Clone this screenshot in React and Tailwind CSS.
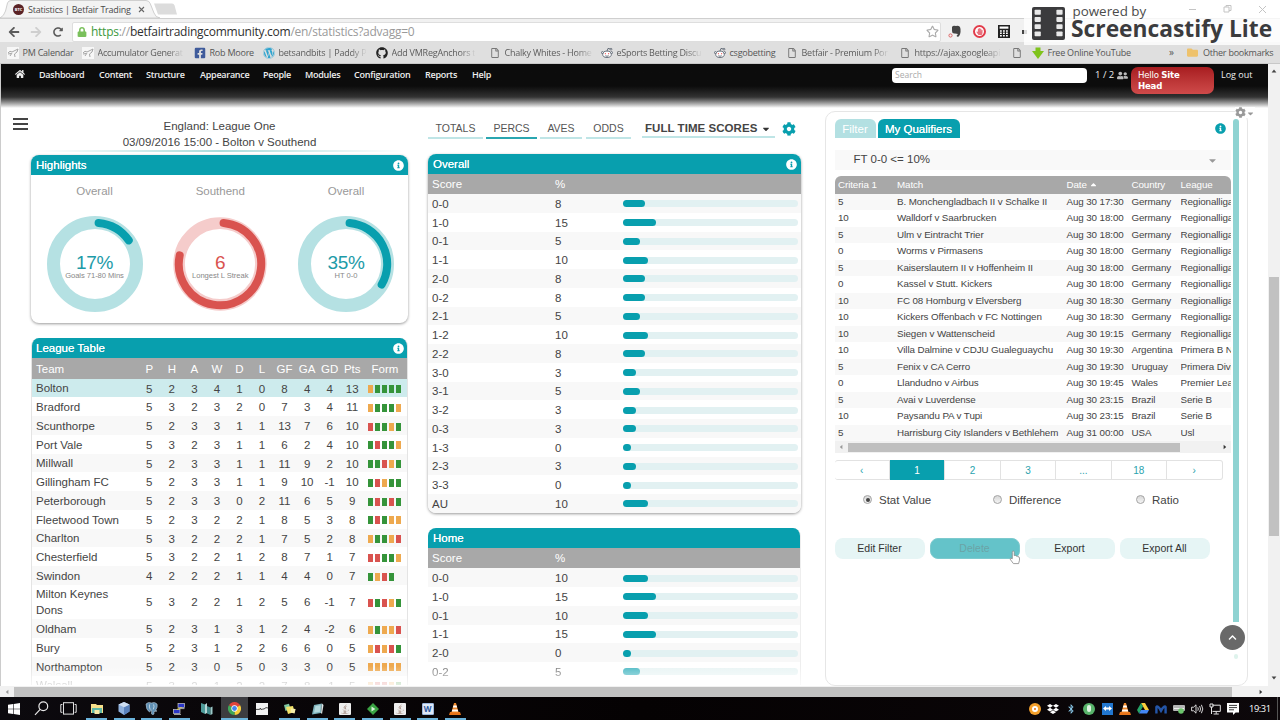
import React from "react";
import { FaFacebookSquare, FaWordpress, FaGithub, FaRegStar, FaHome, FaInfoCircle, FaCog, FaUserFriends, FaLock, FaDropbox, FaBluetoothB, FaRegFile, FaCaretDown, FaCaretUp, FaJava, FaHandPaper, FaFolder, FaArrowLeft, FaArrowRight, FaRedoAlt, FaChevronUp } from "react-icons/fa";

/* ---------- small drawings ---------- */
const Reddit = () => (
  <svg width="12" height="12" viewBox="0 0 12 12" fill="none" stroke="#5b6470" strokeWidth="0.9">
    <ellipse cx="6" cy="7.3" rx="4.3" ry="3.2" fill="#fff" />
    <path d="M6 4 L7 1.4 L9.3 2" />
    <circle cx="10" cy="2.2" r="0.9" fill="#fff" />
    <circle cx="1.4" cy="5.6" r="1" fill="#fff" />
    <circle cx="10.6" cy="5.6" r="1" fill="#fff" />
    <circle cx="4.4" cy="6.7" r="0.6" fill="#e55" stroke="none" />
    <circle cx="7.6" cy="6.7" r="0.6" fill="#e55" stroke="none" />
    <path d="M4.3 8.8 Q6 9.7 7.7 8.8" />
  </svg>
);
const Horse = () => (
  <svg width="12" height="12" viewBox="0 0 12 12">
    <rect width="12" height="12" fill="#f7f7f7" />
    <path d="M1 6 Q3 3 5 5 L8 3.5 L11 2 L10 5 L7.5 7 L8 10 M5 6 L3 9 M1 7 L4 6.5" stroke="#a5a5a5" strokeWidth="1" fill="none" />
  </svg>
);
const Cone = () => (
  <svg width="12" height="12" viewBox="0 0 12 12">
    <path d="M1 9 H11 L12 12 H0 Z" fill="#e8741a" />
    <path d="M5 0 H7 L9.6 9.6 H2.4 Z" fill="#f08a2c" />
    <path d="M4.4 2.6 H7.6 L8.1 4.6 H3.9 Z M3.3 6.6 H8.7 L9.2 8.4 H2.8 Z" fill="#fff" />
  </svg>
);
const Chrome = () => (
  <svg width="13" height="13" viewBox="-6 -6 12 12">
    <path d="M0 0 L-5.2 -3 A6 6 0 0 1 5.2 -3 Z" fill="#e0443a" />
    <path d="M0 0 L5.2 -3 A6 6 0 0 1 0 6 Z" fill="#f9ce3b" />
    <path d="M0 0 L0 6 A6 6 0 0 1 -5.2 -3 Z" fill="#3fa757" />
    <circle r="2.9" fill="#fff" />
    <circle r="2.2" fill="#4484ee" />
  </svg>
);
const Windows = () => (
  <svg width="12" height="12" viewBox="0 0 12 12" fill="#fff">
    <path d="M0 1.7 L5.2 1 V5.7 H0 Z M5.8 0.9 L12 0 V5.7 H5.8 Z M0 6.3 H5.2 V11 L0 10.3 Z M5.8 6.3 H12 V12 L5.8 11.1 Z" />
  </svg>
);
const SearchGlass = () => (
  <svg width="15" height="15" viewBox="0 0 15 15" fill="none" stroke="#e8e8e8" strokeWidth="1.2">
    <circle cx="9.3" cy="5.2" r="4.4" />
    <path d="M6.2 8.4 L1 13.8" />
  </svg>
);
const TaskView = () => (
  <svg width="17" height="13" viewBox="0 0 17 13" fill="none" stroke="#e0e0e0">
    <rect x="3.5" y="0.7" width="10" height="11.4" />
    <path d="M2.4 2.5 H0.8 V10.3 H2.4 M14.6 2.5 H16.2 V10.3 H14.6" />
  </svg>
);
const Explorer = () => (
  <svg width="12" height="11" viewBox="0 0 12 11">
    <path d="M0 1 H5 L6 2 H12 V10 H0 Z" fill="#f6df8a" />
    <path d="M1 5 H11 V10 H1 Z" fill="#5db8a8" />
    <path d="M3.5 7 H8.5 V11 H3.5 Z" fill="#f6e9a8" />
  </svg>
);
const VBox = () => (
  <svg width="12" height="13" viewBox="0 0 12 13">
    <path d="M6 0 L11.5 2.5 V9.5 L6 13 L0.5 9.5 V2.5 Z" fill="#8fb1de" />
    <path d="M6 5.2 L11.5 2.5 V9.5 L6 13 Z" fill="#5a82bd" />
    <path d="M6 0 L11.5 2.5 L6 5.2 L0.5 2.5 Z" fill="#cfdff2" />
  </svg>
);
const Elephant = () => (
  <svg width="13" height="13" viewBox="0 0 13 13">
    <path d="M1 2 Q3 -0.5 6.5 1 Q10 -0.5 12 2 Q13 5 10.5 8.5 L12 9 L9 9.6 V12 Q7.6 13.4 6.6 12 V8 L4.5 10 Q1 8 1 2 Z" fill="#5f8fb3" stroke="#b9cbd9" strokeWidth="0.6" />
    <path d="M4.6 2.4 Q4 5 5.2 7.6 M8.6 2.4 Q9.6 4.5 8.3 7.4" stroke="#e3edf4" strokeWidth="0.7" fill="none" />
  </svg>
);
const Putty = () => (
  <svg width="12" height="12" viewBox="0 0 12 12">
    <rect x="5" y="0.5" width="6.5" height="4" fill="#2a36c8" stroke="#c9c9c9" strokeWidth="0.7" />
    <rect x="0.5" y="6.5" width="6.5" height="4" fill="#2a36c8" stroke="#c9c9c9" strokeWidth="0.7" />
    <path d="M8.5 4.6 L4 6.4" stroke="#f0e23c" />
    <path d="M6 5.6 H11.5 M1 11.6 H8" stroke="#a9a9a9" />
  </svg>
);
const Racks = () => (
  <svg width="13" height="13" viewBox="0 0 13 13">
    <path d="M1 1 L5 2.5 V12 L1 10 Z" fill="#4f9c9a" />
    <path d="M5 2.5 L7 1 V11 L5 12 Z" fill="#b7d8d8" />
    <path d="M7 4 L10.5 5.5 V13 L7 11.5 Z" fill="#3f8788" />
    <path d="M10.5 5.5 L12.5 4.4 V12 L10.5 13 Z" fill="#9cc9c9" />
  </svg>
);
const Pulse = () => (
  <svg width="12" height="12" viewBox="0 0 12 12">
    <rect width="12" height="12" fill="#f2f2f2" />
    <path d="M0 6.4 H3.6 L4.4 5 L5.4 7 L6.4 6 H8 L10 4.6 L12 5" stroke="#333" fill="none" strokeWidth="0.9" />
  </svg>
);
const Notes = () => (
  <svg width="13" height="12" viewBox="0 0 13 12">
    <path d="M1 2 L6 0.8 L7.5 6 L2.5 8 Z" fill="#7fc9a3" />
    <path d="M3 4 L10 3 L11.5 9 L5 11 Z" fill="#f3e36b" />
    <path d="M8 5.5 L12.6 6 L11.6 10.4 L7.6 9.6 Z" fill="#f8efaa" />
  </svg>
);
const Book = () => (
  <svg width="13" height="12" viewBox="0 0 13 12">
    <path d="M3 2 L11 0.5 L10 10 L1 11.5 Z" fill="#7fb4bd" />
    <path d="M4.5 3 L9.6 2.2 L9 8.8 L3 9.8 Z" fill="#b4d8dc" />
    <path d="M11 0.5 L12.5 2 L11 11 L10 10 Z" fill="#e0e6e6" />
  </svg>
);
const JavaTile = () => (
  <span className="flex h-[12px] w-[12px] items-center justify-center rounded-[1px] bg-[#eee] text-[#8a6a5c]"><FaJava size={10} /></span>
);
const Diamond = () => (
  <svg width="12" height="12" viewBox="0 0 12 12">
    <path d="M6 0 L12 6 L6 12 L0 6 Z" fill="#3aa343" />
    <path d="M4.5 3.4 L8.4 6 L4.5 8.6 Z" fill="#d8f0da" />
  </svg>
);
const Word = () => (
  <span className="flex h-[12px] w-[12px] items-center justify-center rounded-[1px] border border-[#9db8df] bg-[#dfe9f7] text-[8px] font-bold leading-none text-[#2b57a0]">W</span>
);
const Drive = () => (
  <svg width="12" height="11" viewBox="0 0 12 11">
    <path d="M4 0 H8 L12 7 H8 Z" fill="#fbce3c" />
    <path d="M4 0 L6 3.5 L2 10.5 L0 7 Z" fill="#25a366" />
    <path d="M4 7 H12 L10 10.6 H2 Z" fill="#4486f4" />
  </svg>
);
const Speaker = () => (
  <svg width="13" height="12" viewBox="0 0 13 12" fill="none" stroke="#ececec" strokeWidth="0.9">
    <path d="M0.6 4.2 H2.6 L5 1.8 V10.2 L2.6 7.8 H0.6 Z" />
    <path d="M6.8 4.3 Q7.8 6 6.8 7.7 M8.6 3 Q10.5 6 8.6 9 M10.4 1.8 Q13.2 6 10.4 10.2" />
  </svg>
);
const Monitor = () => (
  <svg width="12" height="12" viewBox="0 0 12 12" fill="none" stroke="#e4e4e4">
    <path d="M3.5 2.2 H11.3 V8.4 H3.5 M7.2 8.6 V10.8 M4.6 11 H9.8" />
    <path d="M1 1 H4 V4 H1 Z M2.5 4 V11" />
  </svg>
);
const Message = () => (
  <svg width="12" height="12" viewBox="0 0 12 12">
    <path d="M0 0 H12 V9.4 H8.6 L6 12 V9.4 H0 Z" fill="#fff" />
    <path d="M2 2.4 H10 M2 4.6 H10 M2 6.8 H7" stroke="#222" strokeWidth="0.9" />
  </svg>
);
const Film = () => (
  <svg width="33" height="33" viewBox="0 0 33 33">
    <rect width="33" height="33" rx="2" fill="#3b3b3d" />
    {[2.8, 10, 17.2, 24.4].map((y) => (
      <g key={y} fill="#e9e9e9">
        <rect x="2.6" y={y} width="6.2" height="4.9" rx="0.8" />
        <rect x="24.4" y={y} width="6.2" height="4.9" rx="0.8" />
      </g>
    ))}
  </svg>
);

/* ---------- browser chrome ---------- */
const file = <FaRegFile size={10} className="text-[#777]" />;
const BOOKMARKS = [
  { w: "w-[75px]", icon: <Horse />, label: "PM Calendar" },
  { w: "w-[112px]", icon: <Horse />, label: "Accumulator Generat", fade: true },
  { w: "w-[69px]", icon: <FaFacebookSquare size={12} color="#3f5b9b" />, label: "Rob Moore" },
  { w: "w-[113px]", icon: <FaWordpress size={12} color="#2fa4cf" />, label: "betsandbits | Paddy P", fade: true },
  { w: "w-[113px]", icon: <FaGithub size={12} color="#222" />, label: "Add VMRegAnchors t", fade: true },
  { w: "w-[112px]", icon: file, label: "Chalky Whites - Home", fade: true },
  { w: "w-[113px]", icon: <Reddit />, label: "eSports Betting Discu", fade: true },
  { w: "w-[72px]", icon: <Reddit />, label: "csgobetting" },
  { w: "w-[113px]", icon: file, label: "Betfair - Premium Por", fade: true },
  { w: "w-[112px]", icon: file, label: "https://ajax.googleapi", fade: true },
  { w: "w-[21px]", icon: file, label: "" },
  { w: "w-[138px]", icon: <svg width="12" height="12" viewBox="0 0 12 12"><path d="M3.5 0.5 H8.5 V4 H12 L6 12 L0 4 H3.5 Z" fill="#7fc31c" /></svg>, label: "Free Online YouTube" },
];

function Browser() {
  return (
    <header className="relative h-[64px] shrink-0 font-['Open_Sans','Noto_Sans',sans-serif] text-[#555]">
      <div className="flex h-[19px] items-end border-b border-[#cfcfcf] bg-white">
        <svg className="shrink-0" width="178" height="19" viewBox="0 0 178 19">
          <path d="M154 4.5 H172 Q174 4.5 174.6 6.5 L177 15.5 H158 Z" fill="#dcdcdc" />
          <path d="M0 19 Q4 17 5.5 12 L7.5 4 Q8.5 1.5 11 1.5 H146 Q149 1.5 150.2 4.5 L154 14 Q155.5 18.5 160 19 Z" fill="#f3f3f3" stroke="#c4c4c4" strokeWidth="0.8" />
        </svg>
        <div className="-ml-[165px] mb-px flex h-[15px] items-center">
          <span className="flex h-[11px] w-[11px] items-center justify-center rounded-full bg-[#5a2225] text-[4px] font-bold text-white">BTC</span>
          <span className="ml-[4px] w-[104px] whitespace-nowrap text-[9px] tracking-[-0.22px] text-[#4a4a4a]">Statistics | Betfair Trading</span>
          <svg className="ml-[6px]" width="7" height="7" viewBox="0 0 7 7" stroke="#666" strokeWidth="1.1"><path d="M1 1 L6 6 M6 1 L1 6" /></svg>
        </div>
      </div>
      <div className="flex h-[23px] items-center bg-[#f1f1f1] pl-[8px] pt-[2px]">
        <FaArrowLeft size={12} className="text-[#5c5c5c]" />
        <FaArrowRight size={12} className="ml-[10px] text-[#cfcfcf]" />
        <FaRedoAlt size={10} className="ml-[11px] text-[#5c5c5c]" />
        <div className="ml-[9px] flex h-[20px] w-[869px] items-center rounded-[2px] border border-[#dedede] bg-white pl-[4px]">
          <FaLock size={10} className="text-[#7ac05c]" />
          <span className="ml-[4px] whitespace-nowrap text-[12px] tracking-[-0.26px] text-[#9a9a9a]"><span className="text-[#3c9a3c]">https</span>://<span className="text-[#2f2f2f]">betfairtradingcommunity.com</span>/en/statistics?advagg=0</span>
          <FaRegStar size={13} className="ml-auto mr-[1px] text-[#aaa]" />
        </div>
        <svg className="ml-[7px]" width="13" height="13" viewBox="0 0 13 13"><path d="M4 2 Q5 0 8 1 Q12 0 12.5 4 Q13 10 10 12 L8.5 11 L10 9 L7 8.5 Q4 9 4 6 Z" fill="#444" /><circle cx="2.5" cy="10.5" r="1.6" fill="none" stroke="#d66" /></svg>
        <span className="ml-[12px] flex h-[13px] w-[13px] items-center justify-center rounded-full border-2 border-[#e23b4a] bg-white text-[#e8707c]"><FaHandPaper size={7} /></span>
        <svg className="ml-[12px]" width="12" height="13" viewBox="0 0 12 13"><rect width="12" height="13" fill="#222" /><path d="M1.6 2.6 H10.4" stroke="#fff" strokeWidth="2.2" /><path d="M2 6 H10.4 M2 8.3 H10.4 M2 10.7 H10.4" stroke="#fff" strokeWidth="1.4" strokeDasharray="1.8 1.2" /></svg>
        <span className="ml-[12px] h-[4px] w-[5px] bg-[#444]" />
      </div>
      <div className="flex h-[22px] items-center border-b border-[#c8c8c8] bg-[#dfdfdf] pl-[7px] text-[9px]">
        {BOOKMARKS.map((b, i) => (
          <div key={i} className={`flex shrink-0 items-center ${b.w}`}>
            <span className="flex w-[12px] shrink-0 justify-center">{b.icon}</span>
            <span className={`ml-[3.5px] whitespace-nowrap tracking-[-0.23px] ${b.fade ? "bg-linear-to-r from-[#555] from-82% to-[#d4d4d4] bg-clip-text text-transparent" : ""}`}>{b.label}</span>
          </div>
        ))}
        <span className="-ml-[1px] text-[10px]">»</span>
        <FaFolder size={11} className="ml-[13px] text-[#eec26c]" />
        <span className="ml-[5px] whitespace-nowrap tracking-[-0.23px]">Other bookmarks</span>
      </div>
      <div className="absolute right-0 top-0 h-[45px] w-[256px] bg-white/80">
        <div className="flex pl-[8px] pt-[7px]">
          <Film />
          <div className="-mt-[5px] ml-[6px] whitespace-nowrap">
            <div className="pl-[1.5px] text-[13.4px] leading-[18px] text-[#4b4b4b]">powered by</div>
            <div className="text-[22.8px] font-bold leading-[18px] text-[#3b3b3d]">Screencastify Lite</div>
          </div>
        </div>
        <svg className="absolute right-[12px] top-[4px]" width="80" height="10" viewBox="0 0 80 10" fill="none" stroke="#c4c4c4"><path d="M1 5.5 H8 M36 3 H41 V8 H36 Z M38 3 V1.5 H43 V6.5 H41 M71 2 L78 9 M78 2 L71 9" /></svg>
      </div>
    </header>
  );
}

/* ---------- admin bar ---------- */
const MENU = [
  ["Dashboard", "w-[60px]"], ["Content", "w-[47px]"], ["Structure", "w-[54px]"], ["Appearance", "w-[63px]"],
  ["People", "w-[42px]"], ["Modules", "w-[49px]"], ["Configuration", "w-[71px]"], ["Reports", "w-[47px]"], ["Help", "w-[420px]"],
];
function AdminBar() {
  return (
    <nav className="flex h-[44px] shrink-0 items-start bg-linear-to-b from-[#0c0c0c] from-50% via-[#333] via-75% to-white font-['Open_Sans','Noto_Sans',sans-serif] text-[9px] text-[#eee]">
      <FaHome size={10} className="ml-[14px] mt-[5px]" />
      <div className="ml-[14px] mt-[3px] flex font-semibold leading-[16px]">
        {MENU.map(([t, w]) => <span key={t} className={`${w} whitespace-nowrap tracking-[-0.26px]`}>{t}</span>)}
      </div>
      <div className="mt-[4px] h-[15px] w-[195px] shrink-0 rounded-[4px] bg-white pl-[3px] text-[8.5px] leading-[14px] text-[#aaa]">Search</div>
      <span className="ml-[8px] mt-[3px] w-[22px] whitespace-nowrap text-[9.5px] leading-[16px]">1 / 2</span>
      <FaUserFriends size={11} className="mt-[6px] text-[#bbb]" />
      <div className="ml-[3px] mt-[3px] h-[27px] w-[83px] shrink-0 rounded-[7px] bg-linear-to-b from-[#a81c20] to-[#cf4a4a] pl-[7px] pt-[3px] font-['DejaVu_Sans',sans-serif] text-[8.6px] leading-[10.5px] tracking-[-0.2px] text-white">Hello <b>Site<br />Head</b></div>
      <span className="ml-[7px] mt-[3px] whitespace-nowrap leading-[16px]">Log out</span>
    </nav>
  );
}

/* ---------- left column ---------- */
function polar(r, deg) {
  const a = ((deg - 90) * Math.PI) / 180;
  return `${(48 + r * Math.cos(a)).toFixed(2)} ${(48 + r * Math.sin(a)).toFixed(2)}`;
}
function Ring({ title, value, note, end, red }) {
  return (
    <div className="relative flex w-[96px] flex-col items-center">
      <div className="h-[41px] pt-[7px] text-[11.5px] leading-[18px] text-[#999]">{title}</div>
      <svg width="96" height="96" viewBox="0 0 96 96" fill="none">
        <circle cx="48" cy="48" r={red ? 40.9 : 41.5} stroke={red ? "#f5cccb" : "#b5e1e3"} strokeWidth={red ? 11.6 : 13} />
        <path d={`M ${polar(41.2, 5)} A 41.2 41.2 0 ${end > 185 ? 1 : 0} 1 ${polar(41.2, end)}`} stroke={red ? "#d9534f" : "#089fae"} strokeWidth="8" strokeLinecap="round" />
      </svg>
      <div className="absolute top-[78px] flex flex-col items-center">
        <span className={`text-[19px] leading-[20px] tracking-[-0.3px] ${red ? "text-[#d9534f]" : "text-[#1d9ba8]"}`}>{value}</span>
        <span className="-mt-[2px] whitespace-nowrap text-[7.6px] leading-[10px] tracking-[-0.05px] text-[#888]">{note}</span>
      </div>
    </div>
  );
}

const TEAMS = [
  ["Bolton", "5 2 3 4 1 0 8 4 4 13", "ogggg"],
  ["Bradford", "5 3 2 3 2 0 7 3 4 11", "ogggo"],
  ["Scunthorpe", "5 2 3 3 1 1 13 7 6 10", "rggog"],
  ["Port Vale", "5 3 2 3 1 1 6 2 4 10", "grggo"],
  ["Millwall", "5 2 3 3 1 1 11 9 2 10", "ggrog"],
  ["Gillingham FC", "5 2 3 3 1 1 9 10 -1 10", "grogg"],
  ["Peterborough", "5 2 3 3 0 2 11 6 5 9", "grgrg"],
  ["Fleetwood Town", "5 2 3 2 2 1 8 5 3 8", "grgoo"],
  ["Charlton", "5 3 2 2 2 1 7 5 2 8", "oggor"],
  ["Chesterfield", "5 3 2 2 1 2 8 7 1 7", "rrggo"],
  ["Swindon", "4 2 2 2 1 1 4 4 0 7", "gorg"],
  ["Milton Keynes Dons", "5 3 2 2 1 2 5 6 -1 7", "rgrog"],
  ["Oldham", "5 2 3 1 3 1 2 4 -2 6", "ogoor"],
  ["Bury", "5 2 3 1 2 2 6 6 0 5", "ororg"],
  ["Northampton", "5 2 3 0 5 0 3 3 0 5", "ooooo"],
  ["Walsall", "5 3 2 1 2 2 7 8 -1 5", "orrog"],
];
const FORM = { o: "bg-[#eea94f]", g: "bg-[#35943a]", r: "bg-[#d9534f]" };
const GRID = "grid grid-cols-[102px_repeat(10,22.55px)_1fr] items-center pl-[5px] pt-[2px]";

function CardHead({ title, info = true }) {
  return (
    <div className="flex h-[20px] shrink-0 items-center justify-between bg-[#089fae] pl-[5px] pr-[4.5px] pt-[1px] text-[11.5px] text-white [text-shadow:0_0_0.5px_#fff]">
      <span>{title}</span>
      {info && <FaInfoCircle size={11} />}
    </div>
  );
}

function LeftColumn() {
  return (
    <section className="flex h-[573px] w-[377px] flex-col">
      <div className="mt-[7px] flex h-[31px] shrink-0 flex-col items-center text-[11.5px] leading-[15.6px] text-[#444]">
        <span>England: League One</span>
        <span>03/09/2016 15:00 - Bolton v Southend</span>
      </div>
      <div className="mx-[3px] h-[2px] shrink-0 bg-linear-to-r from-white via-[#a9dcdc] to-white" />
      <div className="mt-[3px] h-[168px] shrink-0 overflow-hidden rounded-[8px] bg-white shadow-[0_1px_3px_rgba(0,0,0,0.4)]">
        <CardHead title="Highlights" />
        <div className="flex justify-between pl-[15.5px] pr-[14px]">
          <Ring title="Overall" value="17%" note="Goals 71-80 Mins" end={55} />
          <Ring title="Southend" value="6" note="Longest L Streak" end={282} red />
          <Ring title="Overall" value="35%" note="HT 0-0" end={120} />
        </div>
      </div>
      <div className="mt-[15px] flex-1 overflow-hidden rounded-t-[8px] border-x border-[#e4e4e4] text-[11.5px] text-[#444]">
        <div className="-mx-px"><CardHead title="League Table" /></div>
        <div className={`-mx-px h-[20.5px] bg-[#a8a8a8] text-white ${GRID}`}>
          <span>Team</span>
          {["P", "H", "A", "W", "D", "L", "GF", "GA", "GD", "Pts"].map((h) => <span key={h} className="text-center">{h}</span>)}
          <span className="pl-[8px]">Form</span>
        </div>
        {TEAMS.map(([name, stats, form], i) => (
          <div key={name} className={`-mx-px ${name.startsWith("Milton") ? "h-[34.3px]" : "h-[18.77px]"} ${i === 0 ? "bg-[#cdebed]" : i % 2 ? "bg-white" : "bg-[#f8f8f8]"} ${i === 15 ? "opacity-50" : ""} ${GRID}`}>
            <span className="w-[90px] leading-[15.6px]">{name}</span>
            {stats.split(" ").map((s, j) => <span key={j} className="text-center">{s}</span>)}
            <span className="flex gap-[2px] pl-[5px]">
              {[...form].map((f, j) => <span key={j} className={`h-[8px] w-[5px] ${FORM[f]}`} />)}
            </span>
          </div>
        ))}
      </div>
    </section>
  );
}

/* ---------- middle column ---------- */
const BAR = { 0: "w-[8.5px]", 3: "w-[13.5px]", 5: "w-[17px]", 8: "w-[22px]", 10: "w-[25.5px]", 15: "w-[33.5px]" };
function Scores({ title, rows, info, className }) {
  return (
    <div className={`overflow-hidden bg-white text-[11.5px] text-[#444] ${className}`}>
      <CardHead title={title} info={info} />
      <div className="flex h-[20px] items-center bg-[#a8a8a8] pl-[4px] pt-[1px] text-white"><span className="w-[123px]">Score</span><span>%</span></div>
      {rows.map(([s, v], i) => (
        <div key={s} className={`flex h-[18.75px] items-center pl-[4px] pt-[1px] ${i % 2 ? "bg-white" : "bg-[#f8f8f8]"} ${title === "Home" && i === 5 ? "opacity-70" : ""}`}>
          <span className="w-[123px] pt-[1px]">{s}</span>
          <span className="w-[67.5px] pt-[1px]">{v}</span>
          <span className="h-[7px] w-[175px] rounded-full bg-[#e2f1f2]"><span className={`block h-[7px] rounded-full bg-[#089fae] ${BAR[v]}`} /></span>
        </div>
      ))}
    </div>
  );
}
const OVERALL = [["0-0", 8], ["1-0", 15], ["0-1", 5], ["1-1", 10], ["2-0", 8], ["0-2", 8], ["2-1", 5], ["1-2", 10], ["2-2", 8], ["3-0", 3], ["3-1", 5], ["3-2", 3], ["0-3", 3], ["1-3", 0], ["2-3", 3], ["3-3", 0], ["AU", 10]];
const HOME = [["0-0", 10], ["1-0", 15], ["0-1", 10], ["1-1", 15], ["2-0", 0], ["0-2", 5]];

function MiddleColumn() {
  return (
    <section className="ml-[20px] flex h-[573px] w-[373px] flex-col">
      <div className="flex h-[42px] shrink-0 items-start pt-[6px] text-[10.5px] text-[#555]">
        <span className="mr-[3px] h-[21px] w-[55px] border-b-2 border-[#bfe5e6] text-center leading-[20px]">TOTALS</span>
        <span className="mr-[3px] h-[21px] w-[51px] border-b-2 border-[#2aa6b0] text-center leading-[20px]">PERCS</span>
        <span className="mr-[4px] h-[21px] w-[42px] border-b-2 border-[#bfe5e6] text-center leading-[20px]">AVES</span>
        <span className="mr-[11px] h-[21px] w-[45px] border-b-2 border-[#bfe5e6] text-center leading-[20px]">ODDS</span>
        <span className="flex h-[20px] w-[133px] shrink-0 items-center justify-between border-b-2 border-[#bfe5e6] pl-[3px] pr-[4px] pt-[3px] text-[11.5px] font-bold text-[#444]"><span className="whitespace-nowrap tracking-[0.05px]">FULL TIME SCORES</span><FaCaretDown size={10} className="text-[#333]" /></span>
        <FaCog size={14} className="ml-[7px] mt-[4px] shrink-0 text-[#089fae]" />
      </div>
      <Scores title="Overall" info rows={OVERALL} className="shrink-0 rounded-[8px] shadow-[0_1px_3px_rgba(0,0,0,0.4)]" />
      <Scores title="Home" info={false} rows={HOME} className="mt-[15.5px] flex-1 rounded-t-[8px] border-r border-[#eee]" />
    </section>
  );
}

/* ---------- right panel ---------- */
const MATCHES = [
  [5, "B. Monchengladbach II v Schalke II", "Aug 30 17:30", "Germany", "Regionalliga"],
  [10, "Walldorf v Saarbrucken", "Aug 30 18:00", "Germany", "Regionalliga"],
  [5, "Ulm v Eintracht Trier", "Aug 30 18:00", "Germany", "Regionalliga"],
  [0, "Worms v Pirmasens", "Aug 30 18:00", "Germany", "Regionalliga"],
  [5, "Kaiserslautern II v Hoffenheim II", "Aug 30 18:00", "Germany", "Regionalliga"],
  [0, "Kassel v Stutt. Kickers", "Aug 30 18:00", "Germany", "Regionalliga"],
  [10, "FC 08 Homburg v Elversberg", "Aug 30 18:30", "Germany", "Regionalliga"],
  [10, "Kickers Offenbach v FC Nottingen", "Aug 30 18:30", "Germany", "Regionalliga"],
  [10, "Siegen v Wattenscheid", "Aug 30 19:15", "Germany", "Regionalliga"],
  [10, "Villa Dalmine v CDJU Gualeguaychu", "Aug 30 19:30", "Argentina", "Primera B Nacional"],
  [5, "Fenix v CA Cerro", "Aug 30 19:30", "Uruguay", "Primera Division"],
  [0, "Llandudno v Airbus", "Aug 30 19:45", "Wales", "Premier League"],
  [5, "Avai v Luverdense", "Aug 30 23:15", "Brazil", "Serie B"],
  [10, "Paysandu PA v Tupi", "Aug 30 23:15", "Brazil", "Serie B"],
  [5, "Harrisburg City Islanders v Bethlehem", "Aug 31 00:00", "USA", "Usl"],
];
const MCOLS = "grid grid-cols-[59px_169.5px_65px_49px_51px] items-center pl-[3.5px] pt-[1px] whitespace-nowrap";
const BTN = "flex h-[21px] w-[90px] items-center justify-center rounded-[8px] pt-[1px]";

function Radio({ label, on, className }) {
  return (
    <span className={`flex items-center ${className}`}>
      <span className="-mt-[3px] flex h-[9px] w-[9px] items-center justify-center rounded-full border border-[#a3a3a3] bg-linear-to-b from-[#d8d8d8] to-[#f4f4f4]">{on && <span className="h-[4px] w-[4px] rounded-full bg-[#444]" />}</span>
      <span className="ml-[7px] text-[11.5px] text-[#444]">{label}</span>
    </span>
  );
}

function RightPanel() {
  return (
    <section className="relative ml-[24px] mt-[-1px] h-[575px] w-[423px] rounded-[10px] border border-[#e6e6e6] bg-white pl-[8.5px] pt-[7px]">
      <div className="flex h-[20px] w-[391px] items-start gap-[2px] text-[11.5px] text-white">
        <span className="h-[19px] w-[41px] rounded-t-[6px] bg-[#b3e0e2] text-center leading-[20px]">Filter</span>
        <span className="h-[19px] w-[82px] rounded-t-[6px] bg-[#089fae] text-center leading-[20px] [text-shadow:0_0_0.5px_#fff]">My Qualifiers</span>
        <FaInfoCircle size={11} className="ml-auto mt-[4px] text-[#089fae]" />
      </div>
      <div className="mt-[11px] flex h-[20px] w-[396px] items-center justify-between bg-[#f9f9f9] pl-[19px] pr-[13px] text-[11.5px] text-[#444]"><span>FT 0-0 &lt;= 10%</span><FaCaretDown size={11} className="text-[#999]" /></div>
      <div className="mt-[6px] w-[396.5px] overflow-hidden rounded-t-[6px] text-[9.8px] tracking-[-0.1px] text-[#444]">
        <div className={`h-[17.5px] bg-[#a8a8a8] text-white ${MCOLS}`}><span>Criteria 1</span><span>Match</span><span className="flex items-center">Date<FaCaretUp size={9} className="-mt-[2px] ml-[2px]" /></span><span>Country</span><span>League</span></div>
        {MATCHES.map((m, i) => (
          <div key={i} className={`h-[16.5px] ${i % 2 ? "bg-white" : "bg-[#f8f8f8]"} ${MCOLS}`}>{m.map((c, j) => <span key={j} className={j === 4 ? "overflow-hidden" : ""}>{c}</span>)}</div>
        ))}
        <div className="flex h-[12px] items-center justify-between bg-[#f1f1f1] px-[4px]">
          <svg width="4" height="6" viewBox="0 0 4 6"><path d="M3.4 0.8 V5.2 L0.8 3 Z" fill="#999" /></svg>
          <span className="ml-[5px] mr-auto h-[9px] w-[332px] bg-[#bfbfbf]" />
          <svg width="4" height="6" viewBox="0 0 4 6"><path d="M0.6 0.8 V5.2 L3.2 3 Z" fill="#333" /></svg>
        </div>
      </div>
      <div className="mt-[7px] flex h-[20px] w-[388px] divide-x divide-[#e2e2e2] rounded-[3px] border-y border-r border-[#e2e2e2] text-[10px] leading-[19px] text-[#2aa3ae]">
        {["‹", "1", "2", "3", "...", "18", "›"].map((p) => <span key={p} className={`flex-1 text-center ${p === "1" ? "-my-px bg-[#089fae] leading-[21px] text-white" : ""}`}>{p}</span>)}
      </div>
      <div className="mt-[12px] flex h-[18px] items-center pl-[28.5px]"><Radio label="Stat Value" on className="w-[130px]" /><Radio label="Difference" className="w-[143px]" /><Radio label="Ratio" /></div>
      <div className="mt-[27.5px] flex gap-[5px] text-[10.5px] text-[#333]">
        <span className={`${BTN} bg-[#e6f5f5]`}>Edit Filter</span>
        <span className={`${BTN} border border-[#7ccace] bg-[#64c3c9] text-[#6ba3a6]`}>Delete</span>
        <span className={`${BTN} bg-[#e6f5f5]`}>Export</span>
        <span className={`${BTN} bg-[#e6f5f5]`}>Export All</span>
      </div>
      <span className="absolute left-[407px] top-[7px] h-[503px] w-[6px] rounded-t-[3px] bg-[#8fd3d2]" />
      <span className="absolute left-[408px] top-[542px] h-[5px] w-[4px] rounded-full bg-[#def3ec]" />
      <span className="absolute left-[394px] top-[513px] flex h-[25px] w-[25px] items-center justify-center rounded-full bg-[#696969] text-white"><FaChevronUp size={9} /></span>
      <span className="absolute left-[409px] top-[-5px] flex items-center bg-white text-[#999]"><FaCog size={11} /><FaCaretDown size={9} className="mt-[2px]" /></span>
      <svg className="absolute left-[183px] top-[438px]" width="12" height="15" viewBox="0 0 12 15"><path d="M3.3 8.2 V2.2 Q3.3 1 4.2 1 Q5.2 1 5.2 2.2 V5.6 Q6.6 5 7 6.1 Q8.4 5.6 8.8 6.7 Q10.4 6.4 10.5 8 V10.2 L9.6 13.6 H4.4 L1 9 Q1.2 7.3 3.3 8.8 Z" fill="#fff" stroke="#888" strokeWidth="0.8" /></svg>
    </section>
  );
}

/* ---------- taskbar ---------- */
const TASKS = [
  [<Windows />, ""], [<SearchGlass />, ""], [<TaskView />, ""], [<Explorer />, "run"], [<VBox />, "run"], [<Elephant />, "run"], [<Putty />, "run"], [<Racks />, ""],
  [<Chrome />, "active"], [<Pulse />, ""], [<Notes />, "run"], [<Book />, "run"], [<JavaTile />, "run"], [<Diamond />, "run"], [<JavaTile />, "run"], [<Word />, "run"], [<Cone />, "run"],
];
const TRAY = [
  <span className="flex h-[12px] w-[12px] items-center justify-center rounded-full bg-[#f3a02c]"><span className="h-[6px] w-[6px] rounded-full border-2 border-white bg-[#d9731a]" /></span>,
  <FaDropbox size={12} color="#fff" />,
  <FaBluetoothB size={10} color="#8fd0f2" />,
  <span className="flex h-[12px] w-[12px] items-center justify-center rounded-full bg-[#58b36a]"><span className="h-[7px] w-[4px] rounded-full bg-[#dff3e2]" /></span>,
  <span className="flex h-[12px] w-[11px] items-center justify-center bg-[#2277d0]"><svg width="9" height="7" viewBox="0 0 9 7"><path d="M0 3.5 L3 1 V2.6 H6 V1 L9 3.5 L6 6 V4.4 H3 V6 Z" fill="#fff" /></svg></span>,
  <Cone />,
  <Drive />,
  <svg width="12" height="10" viewBox="0 0 12 10" fill="none" stroke="#2455a8" strokeWidth="2.4"><path d="M1.4 9.5 V3 Q2.6 0.8 6 6.8 Q9.4 0.8 10.6 3 V9.5" /></svg>,
  <svg width="12" height="10" viewBox="0 0 12 10"><rect y="1" width="12" height="6" rx="1" fill="#b5b5b5" /><path d="M1 4.5 H11" stroke="#eee" /><circle cx="8" cy="7" r="2.8" fill="#6cc46c" /></svg>,
  <Speaker />, <Monitor />, <Message />,
];

function Taskbar() {
  return (
    <footer className="flex h-[23px] shrink-0 bg-linear-to-r from-[#0c0a0e] via-[#050203] to-[#0d080b] font-['Open_Sans',sans-serif]">
      {TASKS.map(([icon, st], i) => (
        <span key={i} className={`relative flex h-[23px] w-[27.6px] shrink-0 items-center justify-center ${st === "active" ? "bg-[#3d3d40]" : ""}`}>
          {icon}
          {st && <span className={`absolute bottom-0 h-[2px] bg-[#6bb4dc] ${st === "active" ? "w-full" : "w-[21px]"}`} />}
        </span>
      ))}
      <div className="ml-auto flex">
        {TRAY.map((t, i) => <span key={i} className="flex h-[23px] w-[18px] items-center justify-center">{t}</span>)}
        <span className="w-[31px] pl-[7px] text-[9.3px] leading-[23px] tracking-[-0.4px] text-white">19:31</span>
        <span className="ml-[4px] w-[3px] border-l border-[#555]" />
      </div>
    </footer>
  );
}

export default function App() {
  return (
    <div className="flex h-[720px] w-[1280px] flex-col overflow-hidden bg-white font-['Liberation_Sans',Arial,sans-serif]">
      <Browser />
      <div className="flex h-[622px] shrink-0">
        <div className="flex w-[1268px] flex-col overflow-hidden border-l border-[#ccc]">
          <AdminBar />
          <main className="relative -mt-px flex h-[580px] pt-[5px]">
            <div className="ml-[12px] mr-[3px] mt-[6px] flex h-[12px] w-[15px] flex-col justify-between">
              <span className="h-[2px] bg-[#444]" /><span className="h-[2px] bg-[#444]" /><span className="h-[2px] bg-[#444]" />
            </div>
            <LeftColumn />
            <MiddleColumn />
            <RightPanel />
            <div className="pointer-events-none absolute left-0 top-[559px] h-[19px] w-[800px] bg-linear-to-b from-white/0 to-white/70" />
          </main>
        </div>
        <div className="flex w-[12px] flex-col items-center bg-[#f1f1f1] pt-[5px]">
          <svg width="6" height="4" viewBox="0 0 6 4"><path d="M0.6 3.4 H5.4 L3 0.6 Z" fill="#444" /></svg>
          <span className="mt-[204px] h-[259px] w-[10px] bg-[#c1c1c1]" />
          <svg className="mt-[140px]" width="6" height="4" viewBox="0 0 6 4"><path d="M0.6 0.6 H5.4 L3 3.4 Z" fill="#444" /></svg>
        </div>
      </div>
      <div className="flex h-[11px] shrink-0 items-center bg-[#f1f1f1]">
        <svg className="ml-[5px]" width="4" height="6" viewBox="0 0 4 6"><path d="M3.4 0.8 V5.2 L0.8 3 Z" fill="#999" /></svg>
        <span className="ml-[5px] h-[10px] w-[1218px] bg-[#c1c1c1]" />
        <svg className="ml-[27px]" width="4" height="6" viewBox="0 0 4 6"><path d="M0.6 0.8 V5.2 L3.2 3 Z" fill="#333" /></svg>
      </div>
      <Taskbar />
    </div>
  );
}
